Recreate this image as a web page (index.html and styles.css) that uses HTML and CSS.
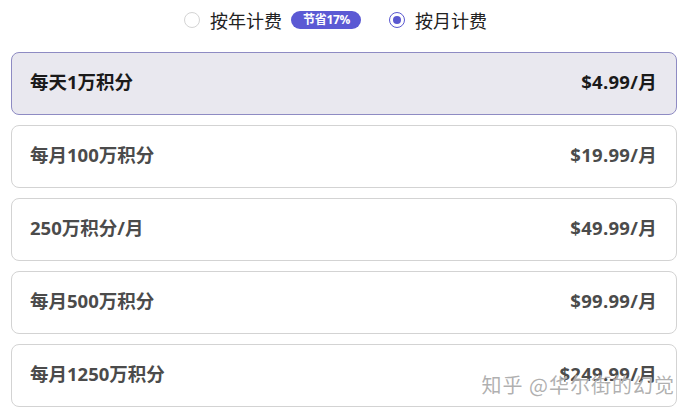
FILE: index.html
```html
<!DOCTYPE html>
<html lang="zh">
<head>
<meta charset="utf-8">
<link rel="stylesheet" href="styles.css">
</head>
<body>
<div class="page">
  <div class="billing">
    <label class="opt">
      <span class="radio"></span>
      <span class="opt-text">按年计费</span>
      <span class="badge">节省17%</span>
    </label>
    <label class="opt opt-on">
      <span class="radio radio-on"><span class="dot"></span></span>
      <span class="opt-text">按月计费</span>
    </label>
  </div>
  <div class="plans">
    <div class="plan plan-active"><span>每天1万积分</span><span class="price">$4.99/月</span></div>
    <div class="plan"><span>每月100万积分</span><span class="price">$19.99/月</span></div>
    <div class="plan"><span>250万积分/月</span><span class="price">$49.99/月</span></div>
    <div class="plan"><span>每月500万积分</span><span class="price">$99.99/月</span></div>
    <div class="plan"><span>每月1250万积分</span><span class="price">$249.99/月</span></div>
  </div>
  <div class="watermark">知乎 @华尔街的幻觉</div>
</div>
</body>
</html>
```

FILE: styles.css
```css
* { box-sizing: border-box; }
html, body { margin: 0; padding: 0; background: #ffffff; }
body {
  font-family: "Open Sans", "Noto Sans CJK SC", sans-serif;
  width: 690px;
  height: 412px;
  overflow: hidden;
}
.page { position: relative; height: 412px; }
.billing {
  display: flex;
  align-items: center;
  height: 40px;
  padding-left: 184px;
  margin-bottom: 12px;
}
.opt {
  display: flex;
  align-items: center;
  color: #222;
  font-size: 18px;
  font-family: "Noto Sans CJK SC", sans-serif;
}
.opt + .opt { margin-left: 28px; }
.radio {
  width: 16px;
  height: 16px;
  border-radius: 50%;
  border: 1px solid #d4d4d4;
  display: inline-flex;
  align-items: center;
  justify-content: center;
  margin-right: 10px;
}
.radio-on { border: 1.5px solid #5a58d0; }
.dot { width: 8px; height: 8px; border-radius: 50%; background: #5a58d0; }
.opt-text { line-height: 20px; }
.badge {
  margin-left: 9px;
  background: #5b59d4;
  color: #fff;
  font-family: "Open Sans", "Noto Sans CJK SC", sans-serif;
  font-size: 12px;
  font-weight: 700;
  line-height: 18px;
  height: 18px;
  padding: 0 11px 0 12px;
  border-radius: 9px;
  letter-spacing: -0.3px;
}
.plans {
  display: flex;
  flex-direction: column;
  gap: 10px;
  padding: 0 13px 0 11px;
}
.plan {
  height: 63px;
  border: 1px solid #d3d3d3;
  border-radius: 8px;
  background: #fff;
  display: flex;
  align-items: center;
  justify-content: space-between;
  padding: 0 19px 2px 18px;
  font-size: 18.5px;
  font-weight: 700;
  color: #4b4b4b;
  line-height: 1;
}
.price { letter-spacing: 0.3px; }
.plan-active {
  background: #e9e8ef;
  border-color: #8e8bc3;
  color: #1a1a1a;
}
.watermark {
  position: absolute;
  right: 15px;
  top: 370px;
  font-family: "Noto Sans CJK SC", sans-serif;
  font-size: 20px;
  color: rgba(150, 150, 150, 0.75);
  text-shadow: 0 0 1px #fff;
  letter-spacing: 1px;
}
```
